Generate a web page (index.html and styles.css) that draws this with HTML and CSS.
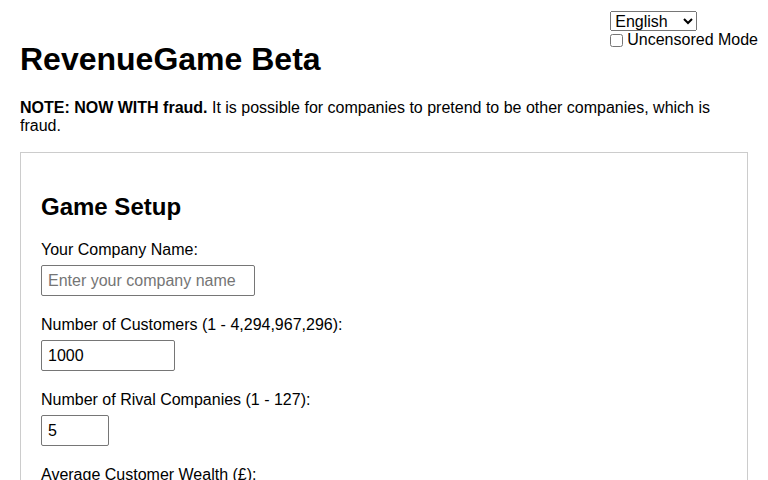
FILE: index.html
```html
<!DOCTYPE html>
<html>
<head>
<meta charset="utf-8">
<link rel="stylesheet" href="styles.css">
</head>
<body>
<div class="top-controls">
  <select class="lang"><option>English</option></select>
  <label class="uncensored"><input type="checkbox"> Uncensored Mode</label>
</div>
<h1>RevenueGame Beta</h1>
<p class="note"><b>NOTE: NOW WITH fraud.</b> It is possible for companies to pretend to be other companies, which is fraud.</p>
<div class="setup">
  <h2>Game Setup</h2>
  <div class="field">
    <label>Your Company Name:</label>
    <input type="text" class="in-name" placeholder="Enter your company name">
  </div>
  <div class="field">
    <label>Number of Customers (1 - 4,294,967,296):</label>
    <input type="text" class="in-cust" value="1000">
  </div>
  <div class="field">
    <label>Number of Rival Companies (1 - 127):</label>
    <input type="text" class="in-rivals" value="5">
  </div>
  <div class="field">
    <label>Average Customer Wealth (£):</label>
    <input type="text" class="in-cust" value="100">
  </div>
</div>
</body>
</html>
```
FILE: styles.css
```css
body {
  margin: 20px;
  font-family: "Liberation Sans", Arial, sans-serif;
  font-size: 16px;
  color: #000;
  background: #fff;
}
.top-controls {
  position: absolute;
  top: 10px;
  right: 10px;
  display: flex;
  flex-direction: column;
  align-items: flex-start;
}
.lang {
  font-family: "Liberation Sans", Arial, sans-serif;
  font-size: 16px;
  width: 87px;
  height: 20px;
  margin: 1px 0 0 0;
}
.uncensored {
  display: flex;
  align-items: center;
  font-size: 16px;
}
.uncensored input {
  margin: 0 4px 0 0;
  width: 13px;
  height: 13px;
}
h1 {
  font-size: 32px;
  margin: 21px 0;
}
.note {
  margin: 16px 0 17px;
}
.setup {
  border: 1px solid #ccc;
  padding: 20px;
}
h2 {
  font-size: 24px;
  margin: 20px 0;
}
.field {
  margin-bottom: 20px;
}
.field label {
  display: block;
  margin-bottom: 6px;
}
.field input {
  font-family: "Liberation Sans", Arial, sans-serif;
  font-size: 16px;
  box-sizing: border-box;
  height: 31px;
  padding: 4px 6px;
  border: 1px solid #767676;
  border-radius: 2px;
  margin: 0;
}
.field input::placeholder { color: #757575; }
.in-name { width: 214px; }
.in-cust { width: 134px; }
.in-rivals { width: 68px; }
```
